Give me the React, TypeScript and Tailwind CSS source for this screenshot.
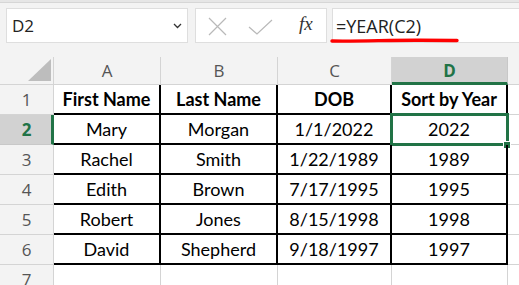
import React from "react";

const rows: string[][] = [
  ["First Name", "Last Name", "DOB", "Sort by Year"],
  ["Mary", "Morgan", "1/1/2022", "2022"],
  ["Rachel", "Smith", "1/22/1989", "1989"],
  ["Edith", "Brown", "7/17/1995", "1995"],
  ["Robert", "Jones", "8/15/1998", "1998"],
  ["David", "Shepherd", "9/18/1997", "1997"],
];

const cellFont = { fontFamily: "Lato, 'Open Sans', sans-serif" };
const uiFont = { fontFamily: "'Open Sans', 'Noto Sans', sans-serif" };

export default function App() {
  return (
    <div className="w-[519px] h-[285px] overflow-hidden bg-[#f3f3f3] relative" style={uiFont}>
      {/* top strip */}
      <div className="h-[3px] bg-[#e6e6e6] border-b border-[#d6d6d6]" />
      {/* formula bar */}
      <div className="flex pl-[6px] pt-[5px] h-[54px]">
        <div className="shrink-0 w-[182px] h-[35px] bg-white border border-[#dedede] flex items-center justify-between pl-[5px] pr-[5px]">
          <span className="text-[17px] text-[#222] leading-none">D2</span>
          <svg width="9" height="6" viewBox="0 0 9 6" className="mt-[1px]">
            <path d="M1 1 L4.5 4.5 L8 1" fill="none" stroke="#333" strokeWidth="1.3" />
          </svg>
        </div>
        <div className="shrink-0 ml-[7px] w-[132px] h-[35px] bg-white border border-[#dedede] relative">
          <svg width="132" height="35" viewBox="0 0 132 35" className="absolute left-0 top-0">
            <path d="M13 9 L30 26 M30 9 L13 26" stroke="#b9b9b9" strokeWidth="1.2" fill="none" />
            <path d="M53 18 L61 25 L76 11" stroke="#b9b9b9" strokeWidth="1.2" fill="none" />
          </svg>
          <span
            className="absolute left-[103px] top-[5px] text-[19px] italic text-[#333] leading-none"
            style={{ fontFamily: "'Liberation Serif', 'DejaVu Serif', serif" }}
          >
            fx
          </span>
        </div>
        <div className="shrink-0 ml-[5px] w-[200px] h-[35px] bg-white border border-[#dedede] relative flex items-center pl-[3px]">
          <span className="text-[18px] text-[#222] leading-none">=YEAR(C2)</span>
          <svg width="132" height="8" viewBox="0 0 132 8" className="absolute left-[-3px] top-[28px]">
            <path d="M2 4 C 30 4.5, 60 3, 90 3.2 S 120 3.5, 127 3.5" stroke="#ff0000" strokeWidth="3.4" strokeLinecap="round" fill="none" />
          </svg>
        </div>
      </div>

      {/* sheet */}
      <div className="grid grid-cols-[54px_107px_117px_114px_116px_1fr] grid-rows-[28px_30px_30px_30px_30px_30px_30px_30px] bg-white">
        {/* header row */}
        <div className="bg-[#f3f3f3] border-r border-b border-[#d4d4d4] relative">
          <svg width="24" height="23" viewBox="0 0 24 23" className="absolute left-[28px] top-[2px]">
            <path d="M23 0 L23 22 L0 22 Z" fill="#bdbdbd" />
          </svg>
        </div>
        {["A", "B", "C"].map((c) => (
          <div key={c} className="bg-[#f3f3f3] border-r border-b border-[#d4d4d4] flex items-center justify-center text-[17px] text-[#555]">
            {c}
          </div>
        ))}
        <div className="bg-[#d2d2d2] border-r border-[#c8c8c8] border-b-[3px] border-b-[#217346] flex items-center justify-center text-[17px] font-bold text-[#217346] pt-[2px]">
          D
        </div>
        <div className="bg-[#f3f3f3] border-b border-[#d4d4d4]" />

        {rows.map((r, i) => (
          <React.Fragment key={i}>
            {i === 1 ? (
              <div className="bg-[#d2d2d2] border-b border-[#c8c8c8] border-r-[3px] border-r-[#217346] flex items-center justify-center text-[17px] font-bold text-[#217346] pl-[2px]">
                {i + 1}
              </div>
            ) : (
              <div className="bg-[#f3f3f3] border-r border-b border-[#d4d4d4] flex items-center justify-center text-[17px] text-[#555]">
                {i + 1}
              </div>
            )}
            {r.map((v, j) => (
              <div
                key={j}
                className={`border-r-2 border-b-2 border-black flex items-center justify-center text-[18px] text-black relative ${i === 0 ? "font-bold" : ""}`}
                style={cellFont}
              >
                {v}
                {i === 1 && j === 3 && (
                  <>
                    <div className="absolute left-[-2px] top-[-2px] right-[-3px] bottom-[-3px] border-[3px] border-[#217346]" />
                    <div className="absolute right-[-5px] bottom-[-6px] w-[6px] h-[6px] bg-[#217346] border border-white box-content" />
                  </>
                )}
              </div>
            ))}
            <div className="border-b border-[#d4d4d4]" />
          </React.Fragment>
        ))}

        {/* row 7 */}
        <div className="bg-[#f3f3f3] border-r border-[#d4d4d4] flex items-center justify-center text-[17px] text-[#555]">
          7
        </div>
        <div className="border-r border-[#d4d4d4]" />
        <div className="border-r border-[#d4d4d4]" />
        <div className="border-r border-[#d4d4d4]" />
        <div className="border-r border-[#d4d4d4]" />
        <div />
      </div>
    </div>
  );
}
